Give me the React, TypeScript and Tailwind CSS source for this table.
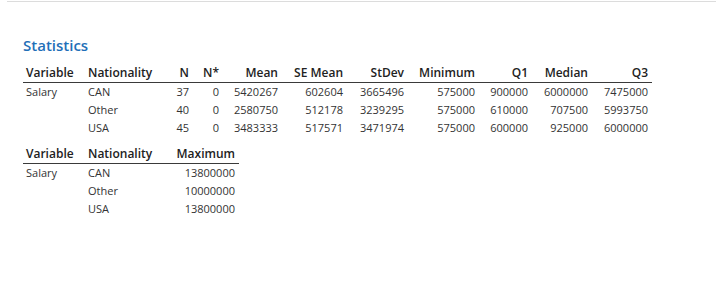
import React from "react";

const font = { fontFamily: '"Open Sans", "Noto Sans", sans-serif' };

type Col = { label: string; w: string; right?: boolean };

const statCols: Col[] = [
  { label: "Variable", w: "w-[62px]" },
  { label: "Nationality", w: "w-[78px]" },
  { label: "N", w: "w-[30px]", right: true },
  { label: "N*", w: "w-[30px]", right: true },
  { label: "Mean", w: "w-[59px]", right: true },
  { label: "SE Mean", w: "w-[65px]", right: true },
  { label: "StDev", w: "w-[61px]", right: true },
  { label: "Minimum", w: "w-[71px]", right: true },
  { label: "Q1", w: "w-[53px]", right: true },
  { label: "Median", w: "w-[60px]", right: true },
  { label: "Q3", w: "w-[60px]", right: true },
];

const statRows = [
  ["Salary", "CAN", "37", "0", "5420267", "602604", "3665496", "575000", "900000", "6000000", "7475000"],
  ["", "Other", "40", "0", "2580750", "512178", "3239295", "575000", "610000", "707500", "5993750"],
  ["", "USA", "45", "0", "3483333", "517571", "3471974", "575000", "600000", "925000", "6000000"],
];

const maxCols: Col[] = [
  { label: "Variable", w: "w-[62px]" },
  { label: "Nationality", w: "w-[78px]" },
  { label: "Maximum", w: "w-[76px]", right: true },
];

const maxRows = [
  ["Salary", "CAN", "13800000"],
  ["", "Other", "10000000"],
  ["", "USA", "13800000"],
];

function StatTable({ cols, rows }: { cols: Col[]; rows: string[][] }) {
  return (
    <table className="table-fixed border-collapse">
      <thead>
        <tr className="border-b border-[#3a3a3a]">
          {cols.map((c) => (
            <th
              key={c.label}
              className={`${c.w} h-[18px] p-0 text-[12px] font-semibold leading-[18px] text-[#222] ${
                c.right ? "pr-[4px] text-right" : "pl-[3px] text-left"
              }`}
            >
              {c.label}
            </th>
          ))}
        </tr>
      </thead>
      <tbody>
        {rows.map((r, i) => (
          <tr key={i}>
            {r.map((v, j) => (
              <td
                key={j}
                className={`h-[18px] p-0 text-[11px] leading-[18px] text-[#333] ${
                  cols[j].right ? "pr-[4px] text-right" : "pl-[3px] text-left"
                }`}
              >
                {v}
              </td>
            ))}
          </tr>
        ))}
      </tbody>
    </table>
  );
}

export default function App() {
  return (
    <div className="h-[298px] w-[716px] bg-white" style={font}>
      <div className="pt-[1px] pl-[7px]">
        <div className="h-[1px] bg-[#dcdcdc]" />
      </div>
      <div className="pl-[23px] pt-[33px]">
        <h2 className="text-[15px] font-semibold leading-[20px] text-[#1f6fb8]">Statistics</h2>
        <div className="mt-[9px]">
          <StatTable cols={statCols} rows={statRows} />
        </div>
        <div className="mt-[8px]">
          <StatTable cols={maxCols} rows={maxRows} />
        </div>
      </div>
    </div>
  );
}
